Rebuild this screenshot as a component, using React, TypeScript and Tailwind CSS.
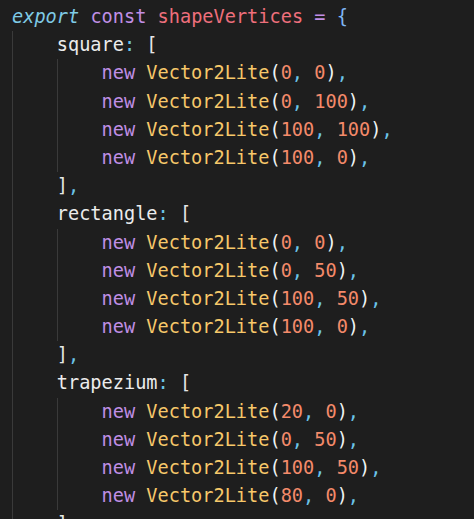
import React from 'react'

type Tok = [string, string]

const C = {
  kw: 'text-[#7fcbe6] italic',
  storage: 'text-[#c08fe6]',
  name: 'text-[#ee6f7c]',
  op: 'text-[#c08fe6]',
  brace: 'text-[#7fb6f5]',
  key: 'text-[#ececec]',
  punct: 'text-[#6cc4e8]',
  bracket: 'text-[#e6e6e6]',
  cls: 'text-[#f7c86a]',
  paren: 'text-[#eef4f4]',
  num: 'text-[#f48a6a]',
}

const vec = (a: string, b: string): Tok[] => [
  ['new ', C.storage],
  ['Vector2Lite', C.cls],
  ['(', C.paren],
  [a, C.num],
  [', ', C.punct],
  [b, C.num],
  [')', C.paren],
  [',', C.punct],
]

const open = (key: string): Tok[] => [
  [key, C.key],
  [': ', C.punct],
  ['[', C.bracket],
]

const close: Tok[] = [
  [']', C.bracket],
  [',', C.punct],
]

const lines: { indent: number; tokens: Tok[] }[] = [
  {
    indent: 0,
    tokens: [
      ['export', C.kw],
      [' ', C.key],
      ['const ', C.storage],
      ['shapeVertices', C.name],
      [' = ', C.op],
      ['{', C.brace],
    ],
  },
  { indent: 1, tokens: open('square') },
  { indent: 2, tokens: vec('0', '0') },
  { indent: 2, tokens: vec('0', '100') },
  { indent: 2, tokens: vec('100', '100') },
  { indent: 2, tokens: vec('100', '0') },
  { indent: 1, tokens: close },
  { indent: 1, tokens: open('rectangle') },
  { indent: 2, tokens: vec('0', '0') },
  { indent: 2, tokens: vec('0', '50') },
  { indent: 2, tokens: vec('100', '50') },
  { indent: 2, tokens: vec('100', '0') },
  { indent: 1, tokens: close },
  { indent: 1, tokens: open('trapezium') },
  { indent: 2, tokens: vec('20', '0') },
  { indent: 2, tokens: vec('0', '50') },
  { indent: 2, tokens: vec('100', '50') },
  { indent: 2, tokens: vec('80', '0') },
  { indent: 1, tokens: close },
]

export default function App() {
  return (
    <div className="w-[474px] h-[519px] overflow-hidden bg-[#1e1e1e] pt-[3px] pl-[12px] font-['DejaVu_Sans_Mono',monospace] text-[18.6px] leading-[28.2px] whitespace-pre">
      {lines.map((line, i) => (
        <div key={i} className="flex h-[28.2px]">
          {Array.from({ length: line.indent }).map((_, j) => (
            <span key={j} className="w-[4ch] shrink-0 border-l border-[#3a3a3a]" />
          ))}
          {line.tokens.map(([text, cls], k) => (
            <span key={k} className={cls}>
              {text}
            </span>
          ))}
        </div>
      ))}
    </div>
  )
}
